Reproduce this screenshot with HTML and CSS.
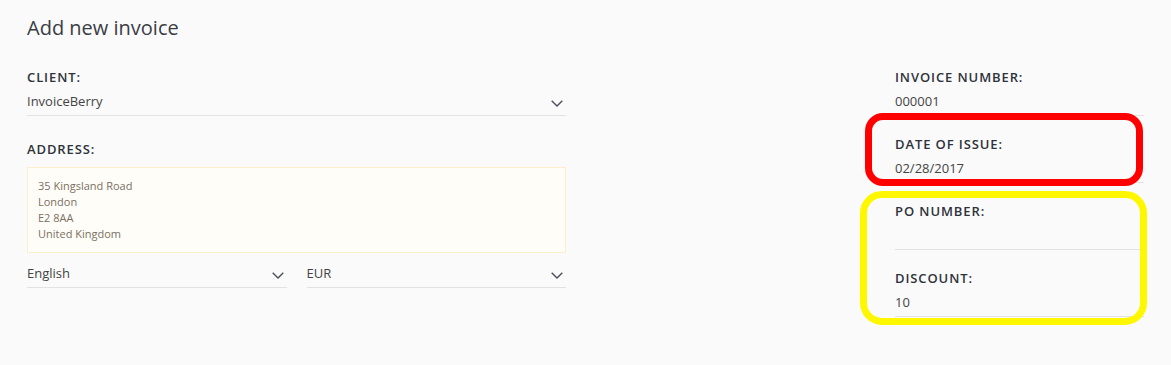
FILE: index.html
```html
<!DOCTYPE html>
<html>
<head>
    <meta charset="UTF-8">
    <title>Add new invoice</title>
    <link rel="stylesheet" href="styles.css">
</head>
<body>
    <div class="page">
        <h1>Add new invoice</h1>

        <div class="form">
            <div class="col-left">
                <div class="field">
                    <div class="label">CLIENT:</div>
                    <div class="value select">
                        <span>InvoiceBerry</span>
                        <svg class="chevron" width="12" height="7" viewBox="0 0 12 7"><path d="M0.7 0.7 L6 6 L11.3 0.7" fill="none" stroke="#4a4f59" stroke-width="1.4"/></svg>
                    </div>
                </div>

                <div class="field address-field">
                    <div class="label">ADDRESS:</div>
                    <div class="address">
                        35 Kingsland Road<br>
                        London<br>
                        E2 8AA<br>
                        United Kingdom
                    </div>
                </div>

                <div class="select-row">
                    <div class="value select">
                        <span>English</span>
                        <svg class="chevron" width="12" height="7" viewBox="0 0 12 7"><path d="M0.7 0.7 L6 6 L11.3 0.7" fill="none" stroke="#4a4f59" stroke-width="1.4"/></svg>
                    </div>
                    <div class="value select">
                        <span>EUR</span>
                        <svg class="chevron" width="12" height="7" viewBox="0 0 12 7"><path d="M0.7 0.7 L6 6 L11.3 0.7" fill="none" stroke="#4a4f59" stroke-width="1.4"/></svg>
                    </div>
                </div>
            </div>

            <div class="col-right">
                <div class="field side">
                    <div class="label">INVOICE NUMBER:</div>
                    <div class="value">000001</div>
                </div>
                <div class="field side marked">
                    <div class="label">DATE OF ISSUE:</div>
                    <div class="value">02/28/2017</div>
                    <div class="ring ring-red"></div>
                </div>
                <div class="group marked">
                    <div class="field side">
                        <div class="label">PO NUMBER:</div>
                        <div class="value"></div>
                    </div>
                    <div class="field side">
                        <div class="label">DISCOUNT:</div>
                        <div class="value">10</div>
                    </div>
                    <div class="ring ring-yellow"></div>
                </div>
            </div>
        </div>
    </div>
</body>
</html>
```

FILE: styles.css
```css
body {
    margin: 0;
    background-color: #fafafa;
    font-family: "Open Sans", Arial, sans-serif;
    color: #333;
}
.page {
    padding: 14px 27px 0;
}
h1 {
    margin: 0;
    font-size: 20px;
    line-height: 28px;
    font-weight: 400;
    color: #3a3d44;
}
.form {
    display: flex;
    margin-top: 25px;
}
.col-left {
    width: 539px;
}
.col-right {
    width: 249px;
    margin-left: 329px;
}
.label {
    font-size: 13px;
    line-height: 20px;
    font-weight: 600;
    letter-spacing: 0.9px;
    color: #2e323b;
    margin-bottom: 4px;
}
.value {
    font-size: 13px;
    line-height: 20px;
    height: 20px;
    padding-bottom: 4px;
    border-bottom: 1px solid #e2e2e2;
    color: #444;
}
.select {
    display: flex;
    justify-content: space-between;
    align-items: center;
}
.chevron {
    margin-right: 3px;
    margin-top: 5px;
}
.address-field {
    margin-top: 23px;
}
.address-field .label {
    margin-bottom: 8px;
}
.address {
    background-color: #fffdf8;
    border: 1px solid #fcefcf;
    padding: 10px 10px;
    font-size: 11px;
    line-height: 16px;
    color: #7a705f;
}
.select-row {
    display: flex;
    gap: 20px;
    margin-top: 10px;
}
.select-row .value {
    flex: 1;
}
.side {
    margin-bottom: 18px;
}
.marked {
    position: relative;
}
.ring {
    position: absolute;
    border-style: solid;
    border-width: 7px;
    box-sizing: border-box;
    pointer-events: none;
}
.ring-red {
    border-color: #ff0000;
    border-radius: 18px;
    left: -30px;
    top: -21px;
    width: 278px;
    height: 73px;
}
.ring-yellow {
    border-color: #fff700;
    border-radius: 22px;
    left: -35px;
    top: -10px;
    width: 287px;
    height: 134px;
}
```
